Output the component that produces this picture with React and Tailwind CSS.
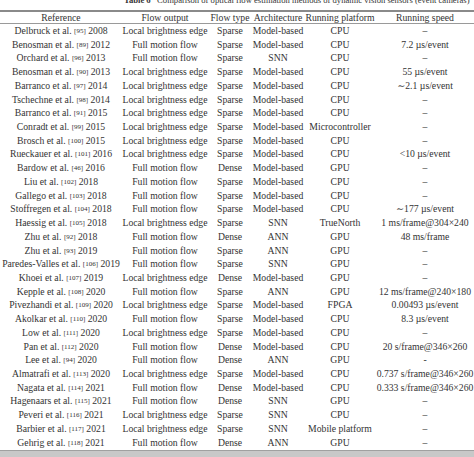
const ROWS = [
  ['Delbruck et al.', '95', '2008', 'Local brightness edge', 'Sparse', 'Model-based', 'CPU', '–'],
  ['Benosman et al.', '89', '2012', 'Full motion flow', 'Sparse', 'Model-based', 'CPU', '7.2 µs/event'],
  ['Orchard et al.', '96', '2013', 'Full motion flow', 'Sparse', 'SNN', 'CPU', '–'],
  ['Benosman et al.', '90', '2013', 'Local brightness edge', 'Sparse', 'Model-based', 'CPU', '55 µs/event'],
  ['Barranco et al.', '97', '2014', 'Local brightness edge', 'Sparse', 'Model-based', 'CPU', '∼2.1 µs/event'],
  ['Tschechne et al.', '98', '2014', 'Local brightness edge', 'Sparse', 'Model-based', 'CPU', '–'],
  ['Barranco et al.', '91', '2015', 'Local brightness edge', 'Sparse', 'Model-based', 'CPU', '–'],
  ['Conradt et al.', '99', '2015', 'Local brightness edge', 'Sparse', 'Model-based', 'Microcontroller', '–'],
  ['Brosch et al.', '100', '2015', 'Local brightness edge', 'Sparse', 'Model-based', 'CPU', '–'],
  ['Rueckauer et al.', '101', '2016', 'Local brightness edge', 'Sparse', 'Model-based', 'CPU', '<10 µs/event'],
  ['Bardow et al.', '46', '2016', 'Full motion flow', 'Dense', 'Model-based', 'GPU', '–'],
  ['Liu et al.', '102', '2018', 'Full motion flow', 'Sparse', 'Model-based', 'CPU', '–'],
  ['Gallego et al.', '103', '2018', 'Full motion flow', 'Sparse', 'Model-based', 'CPU', '–'],
  ['Stoffregen et al.', '104', '2018', 'Full motion flow', 'Sparse', 'Model-based', 'CPU', '∼177 µs/event'],
  ['Haessig et al.', '105', '2018', 'Local brightness edge', 'Sparse', 'SNN', 'TrueNorth', '1 ms/frame@304×240'],
  ['Zhu et al.', '92', '2018', 'Full motion flow', 'Dense', 'ANN', 'GPU', '48 ms/frame'],
  ['Zhu et al.', '93', '2019', 'Full motion flow', 'Sparse', 'ANN', 'GPU', '–'],
  ['Paredes-Valles et al.', '106', '2019', 'Full motion flow', 'Sparse', 'SNN', 'GPU', '–'],
  ['Khoei et al.', '107', '2019', 'Local brightness edge', 'Dense', 'Model-based', 'GPU', '–'],
  ['Kepple et al.', '108', '2020', 'Full motion flow', 'Sparse', 'ANN', 'GPU', '12 ms/frame@240×180'],
  ['Pivezhandi et al.', '109', '2020', 'Local brightness edge', 'Sparse', 'Model-based', 'FPGA', '0.00493 µs/event'],
  ['Akolkar et al.', '110', '2020', 'Full motion flow', 'Sparse', 'Model-based', 'CPU', '8.3 µs/event'],
  ['Low et al.', '111', '2020', 'Local brightness edge', 'Sparse', 'Model-based', 'CPU', '–'],
  ['Pan et al.', '112', '2020', 'Full motion flow', 'Dense', 'Model-based', 'CPU', '20 s/frame@346×260'],
  ['Lee et al.', '94', '2020', 'Full motion flow', 'Dense', 'ANN', 'GPU', '-'],
  ['Almatrafi et al.', '113', '2020', 'Local brightness edge', 'Sparse', 'Model-based', 'CPU', '0.737 s/frame@346×260'],
  ['Nagata et al.', '114', '2021', 'Full motion flow', 'Dense', 'Model-based', 'CPU', '0.333 s/frame@346×260'],
  ['Hagenaars et al.', '115', '2021', 'Full motion flow', 'Dense', 'SNN', 'GPU', '–'],
  ['Peveri et al.', '116', '2021', 'Local brightness edge', 'Sparse', 'SNN', 'CPU', '–'],
  ['Barbier et al.', '117', '2021', 'Local brightness edge', 'Sparse', 'SNN', 'Mobile platform', '–'],
  ['Gehrig et al.', '118', '2021', 'Full motion flow', 'Dense', 'ANN', 'GPU', '–'],
]

const HEAD = ['Reference', 'Flow output', 'Flow type', 'Architecture', 'Running platform', 'Running speed']
const GRID = 'grid grid-cols-[122px_86px_44px_52px_72px_98px] text-center whitespace-nowrap'

export default function App() {
  return (
    <div className="w-[474px] h-[457px] overflow-hidden bg-white text-[#333] text-[9.7px]" style={{ fontFamily: '"Liberation Serif", "DejaVu Serif", serif' }}>
      <div className="h-[8px] overflow-hidden">
        <p className="-mt-[5px] pl-[124px] leading-[10px] text-[8.6px] whitespace-nowrap">
          <b>Table 6</b>&nbsp;&nbsp;&nbsp;Comparison of optical flow estimation methods of dynamic vision sensors (event cameras)
        </p>
      </div>
      <div className="border-t-2 border-[#8a8a8a] mt-[2px]" />
      <div className={`${GRID} h-[11px] leading-[11px]`}>
        {HEAD.map(h => <div key={h}>{h}</div>)}
      </div>
      <div className="border-t border-[#9a9a9a]" />
      {ROWS.map((r, i) => (
        <div key={i} className={`${GRID} h-[13.73px] leading-[13.73px]`}>
          <div>
            {r[0]} <sup className="text-[7px] relative -top-[1px]">[{r[1]}]</sup> {r[2]}
          </div>
          <div>{r[3]}</div>
          <div>{r[4]}</div>
          <div>{r[5]}</div>
          <div>{r[6]}</div>
          <div>{r[7]}</div>
        </div>
      ))}
      <div className="mt-[1px] h-[8px] bg-[#c8c8c8] border-t border-[#a0a0a0]" />
    </div>
  )
}
